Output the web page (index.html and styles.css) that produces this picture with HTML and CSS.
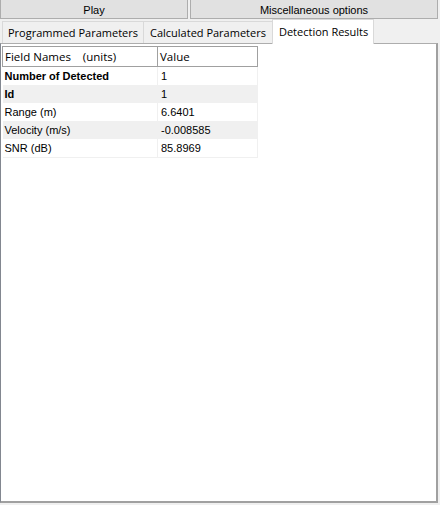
FILE: index.html
```html
<!DOCTYPE html>
<html>
<head>
<meta charset="utf-8">
<link rel="stylesheet" href="styles.css">
</head>
<body>
<div class="window">
  <div class="topbar">
    <div class="btn btn-play">Play</div>
    <div class="btn btn-misc">Miscellaneous options</div>
  </div>
  <div class="tabs">
    <div class="tab tab-first">Programmed Parameters</div>
    <div class="tab tab-calc">Calculated Parameters</div>
    <div class="tab tab-active">Detection Results</div>
  </div>
  <div class="panel">
    <table class="grid">
      <thead>
        <tr>
          <th class="c1">Field Names&nbsp;&nbsp;&nbsp;&nbsp;(units)</th>
          <th class="c2">Value</th>
        </tr>
      </thead>
      <tbody>
        <tr><td class="c1 b">Number of Detected</td><td class="c2">1</td></tr>
        <tr class="alt"><td class="c1 b">Id</td><td class="c2">1</td></tr>
        <tr><td class="c1">Range (m)</td><td class="c2">6.6401</td></tr>
        <tr class="alt"><td class="c1">Velocity (m/s)</td><td class="c2">-0.008585</td></tr>
        <tr><td class="c1">SNR (dB)</td><td class="c2">85.8969</td></tr>
      </tbody>
    </table>
  </div>
</div>
</body>
</html>
```

FILE: styles.css
```css
html, body {
  margin: 0;
  padding: 0;
  background: #f0f0f0;
}
.window {
  width: 440px;
  height: 505px;
  display: flex;
  flex-direction: column;
  overflow: hidden;
  font-family: "Liberation Sans", Arial, sans-serif;
  font-size: 11px;
  color: #000;
}
.topbar {
  display: flex;
  gap: 2px;
  height: 19px;
  padding-right: 2px;
}
.btn {
  box-sizing: border-box;
  height: 19px;
  background: #e1e1e1;
  border: 1px solid #adadad;
  border-top: none;
  display: flex;
  align-items: center;
  justify-content: center;
  padding-top: 1px;
}
.btn-play {
  width: 188px;
}
.btn-misc {
  flex: 1;
}
.tabs {
  display: flex;
  align-items: flex-end;
  height: 24px;
  padding-left: 2px;
  position: relative;
  z-index: 1;
  font-family: "Open Sans", "Noto Sans", sans-serif;
  font-size: 11px;
}
.tab {
  box-sizing: border-box;
  height: 22px;
  padding: 0 5px 0 5px;
  border: 1px solid #d9d9d9;
  border-bottom: none;
  border-left: none;
  background: #f0f0f0;
  display: flex;
  align-items: center;
  white-space: nowrap;
}
.tab-first {
  border-left: 1px solid #d9d9d9;
}
.tab-calc {
  padding: 0 6px 0 6px;
}
.tab-active {
  height: 25px;
  margin-bottom: -1px;
  background: #fff;
  border-left: 1px solid #d9d9d9;
  margin-left: -1px;
  padding: 0 5px 2px 6px;
}
.panel {
  box-sizing: border-box;
  height: 460px;
  margin-right: 2px;
  background: #fff;
  border: 1px solid #adadad;
  border-left: 1px solid #828790;
  border-bottom: 2px solid #a0a0a0;
  border-right: 2px solid #a0a0a0;
  padding: 2px 0 0 1px;
}
.grid {
  border-collapse: collapse;
  table-layout: fixed;
  width: 256px;
}
.grid th {
  height: 20px;
  box-sizing: border-box;
  font-family: "Open Sans", "Noto Sans", sans-serif;
  font-size: 11.5px;
  font-weight: normal;
  text-align: left;
  padding: 0 0 0 2px;
  background: #fff;
  border-top: 1px solid #a0a0a0;
  border-bottom: 1px solid #a0a0a0;
  border-right: 1px solid #a0a0a0;
  white-space: nowrap;
}
.grid th.c1 {
  width: 155px;
  border-left: 1px solid #a0a0a0;
}
.grid td {
  height: 18px;
  padding: 0 0 0 2px;
  white-space: nowrap;
  border-right: 1px solid #f0f0f0;
}
.grid td.c1 {
  padding-left: 2px;
}
.grid td.c2 {
  padding-left: 3px;
}
.grid tbody tr:last-child td {
  border-bottom: 1px solid #f0f0f0;
}
.grid .b {
  font-weight: bold;
}
.grid tr.alt td {
  background: #f0f0f0;
}
```
